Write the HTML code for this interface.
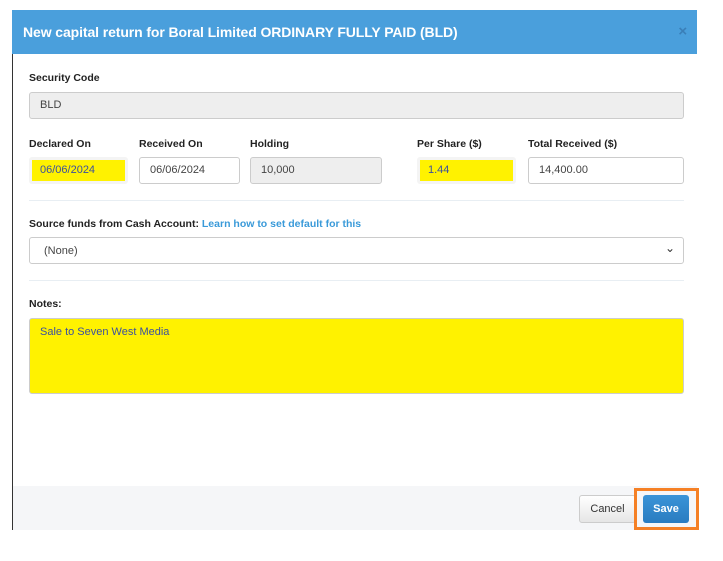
<!DOCTYPE html><html><head><style>
body{margin:0;width:723px;height:561px;background:#fff;font-family:"Liberation Sans",sans-serif;position:relative;overflow:hidden}
.a{position:absolute}
.m{left:12px;top:10px;width:685px;height:520px;border-left:1px solid #333;background:#fff}
.h{left:12px;top:10px;width:685px;height:44px;background:#4a9fdc;color:#fff;font-weight:bold;font-size:14px;line-height:44px;text-indent:11px;letter-spacing:-0.1px}
.x{right:10px;color:#3a7fb8;font-size:15px}
.l{font-size:10.5px;font-weight:bold;color:#222}
.i{box-sizing:border-box;border:1px solid #ccc;border-radius:3px;font-size:11px;color:#444;padding-left:10px;line-height:24px;height:27px}
.g{background:#eee}.y{background:#fff200;color:#3a4fa0}
.hr{left:29px;width:655px;height:1px;background:#e8eef3}
</style></head><body>
<div class="a m"></div>
<div class="a h">New capital return for Boral Limited ORDINARY FULLY PAID (BLD)<span class="a x" style="top:0">×</span></div>
<div class="a l" style="left:29px;top:72px">Security Code</div>
<div class="a i g" style="left:29px;top:92px;width:655px">BLD</div>
<div class="a l" style="left:29px;top:138px">Declared On</div>
<div class="a l" style="left:139px;top:138px">Received On</div>
<div class="a l" style="left:250px;top:138px">Holding</div>
<div class="a l" style="left:417px;top:138px">Per Share ($)</div>
<div class="a l" style="left:528px;top:138px">Total Received ($)</div>
<div class="a i y" style="left:29px;top:157px;width:99px;border:3px solid #f4f4f4;padding-left:8px;line-height:20px">06/06/2024</div>
<div class="a i" style="left:139px;top:157px;width:101px">06/06/2024</div>
<div class="a i g" style="left:250px;top:157px;width:132px">10,000</div>
<div class="a i y" style="left:417px;top:157px;width:99px;border:3px solid #f4f4f4;padding-left:8px;line-height:20px">1.44</div>
<div class="a i" style="left:528px;top:157px;width:156px">14,400.00</div>
<div class="a hr" style="top:200px"></div>
<div class="a l" style="left:29px;top:218px">Source funds from Cash Account: <span style="color:#3a9ad9">Learn how to set default for this</span></div>
<div class="a i" style="left:29px;top:237px;width:655px;padding-left:14px;line-height:26px">(None)<span class="a" style="right:8px;top:-3px;font-size:12px;color:#333">&#8964;</span></div>
<div class="a hr" style="top:280px"></div>
<div class="a l" style="left:29px;top:298px">Notes:</div>
<div class="a i y" style="left:29px;top:318px;width:655px;height:76px;padding-left:10px;line-height:14px;padding-top:6px">Sale to Seven West Media</div>
<div class="a" style="left:13px;top:486px;width:684px;height:44px;background:#f5f6f8"></div>
<div class="a" style="left:579px;top:495px;width:57px;height:28px;box-sizing:border-box;border:1px solid #ccc;border-radius:3px;background:linear-gradient(#fff,#e6e6e6);font-size:11px;color:#333;text-align:center;line-height:26px">Cancel</div>
<div class="a" style="left:634px;top:488px;width:65px;height:42px;box-sizing:border-box;border:3px solid #f58025"></div>
<div class="a" style="left:643px;top:495px;width:46px;height:28px;border-radius:3px;background:linear-gradient(#3a94d8,#2a7cc0);font-size:11px;color:#fff;font-weight:bold;text-align:center;line-height:28px">Save</div>
</body></html>
